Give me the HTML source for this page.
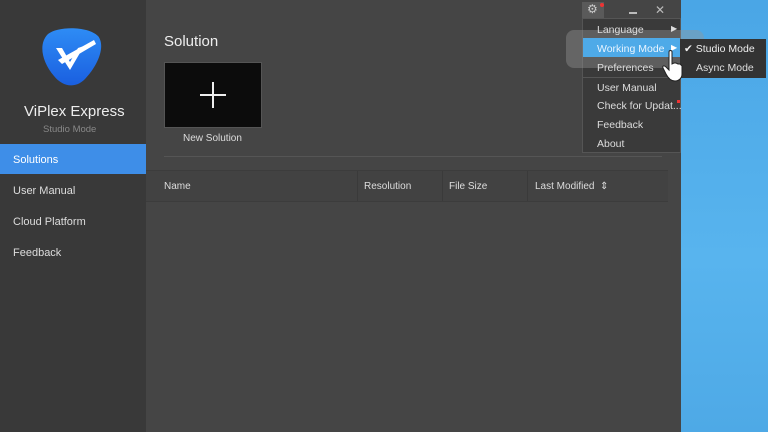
<!DOCTYPE html>
<html><head><style>
*{margin:0;padding:0;box-sizing:border-box}
body{width:768px;height:432px;overflow:hidden;position:relative;font-family:"Liberation Sans",sans-serif;background:#444;color:#ddd}
.side{position:absolute;left:0;top:0;width:146px;height:432px;background:#393939}
.main{position:absolute;left:146px;top:0;width:536px;height:432px;background:#454545}
.blue{position:absolute;left:681px;top:0;width:87px;height:432px;background:linear-gradient(180deg,#4aa6e6,#58b4ee 60%,#4ea9e6)}
.t{position:absolute;white-space:nowrap}
.nav{position:absolute;left:0;width:146px;height:30px;font-size:11px;padding:10px 0 0 13px;color:#ddd}
.mi{position:absolute;left:597px;font-size:10.5px;color:#ddd}
</style></head><body>
<div class="side">
<svg style="position:absolute;left:38px;top:26px" width="66" height="62" viewBox="0 0 66 62">
<defs><linearGradient id="g" x1="0" y1="0" x2="0" y2="1"><stop offset="0" stop-color="#2e8cf5"/><stop offset="1" stop-color="#1a5fe0"/></linearGradient></defs>
<path d="M10 8 C20 0 50 0 60 10 C68 20 60 40 46 54 C36 63 24 60 16 50 C4 36 0 18 10 8Z" fill="url(#g)"/>
<path d="M18 22 L32 44 L46 20 L40 22 L32 36 L24 22Z" fill="#fff"/>
<path d="M20 34 L56 14 L58 18 L24 38Z" fill="#fff"/>
</svg>
<div class="t" style="left:24px;top:103px;font-size:15px;color:#eee">ViPlex Express</div>
<div class="t" style="left:43px;top:124px;font-size:9.5px;color:#888">Studio Mode</div>
<div class="nav" style="top:144px;background:#3e8ee8;color:#fff">Solutions</div>
<div class="nav" style="top:175px">User Manual</div>
<div class="nav" style="top:206px">Cloud Platform</div>
<div class="nav" style="top:237px">Feedback</div>
</div>
<div class="main"></div>
<div class="t" style="left:164px;top:33px;font-size:15px;color:#eee">Solution</div>
<div style="position:absolute;left:164px;top:62px;width:98px;height:66px;background:#0c0c0c;border:1px solid #555"></div>
<div style="position:absolute;left:212px;top:82px;width:2px;height:26px;background:#eee"></div>
<div style="position:absolute;left:200px;top:94px;width:26px;height:2px;background:#eee"></div>
<div class="t" style="left:183px;top:133px;font-size:10px;color:#ddd">New Solution</div>
<div style="position:absolute;left:164px;top:156px;width:498px;height:1px;background:#555"></div>
<div style="position:absolute;left:146px;top:170px;width:522px;height:32px;background:#424242;border-top:1px solid #3c3c3c;border-bottom:1px solid #3c3c3c"></div>
<div style="position:absolute;left:357px;top:171px;width:1px;height:30px;background:#3a3a3a"></div>
<div style="position:absolute;left:442px;top:171px;width:1px;height:30px;background:#3a3a3a"></div>
<div style="position:absolute;left:527px;top:171px;width:1px;height:30px;background:#3a3a3a"></div>
<div class="t" style="left:164px;top:181px;font-size:10px">Name</div>
<div class="t" style="left:364px;top:181px;font-size:10px">Resolution</div>
<div class="t" style="left:449px;top:181px;font-size:10px">File Size</div>
<div class="t" style="left:535px;top:181px;font-size:10px">Last Modified &nbsp;⇕</div>
<div class="blue"></div>
<div style="position:absolute;left:582px;top:2px;width:22px;height:17px;background:#5a5a5a"></div>
<div class="t" style="left:587px;top:2px;font-size:12px;color:#ccc">⚙</div>
<div style="position:absolute;left:600px;top:3px;width:4px;height:4px;border-radius:2px;background:#e33"></div>
<div style="position:absolute;left:629px;top:12px;width:8px;height:2px;background:#bbb"></div>
<div class="t" style="left:655px;top:3px;font-size:12px;color:#bbb">✕</div>
<div style="position:absolute;left:582px;top:18px;width:99px;height:135px;background:#3a3a3a;border:1px solid #555"></div>
<div style="position:absolute;left:566px;top:30px;width:138px;height:38px;background:rgba(150,150,150,.4);border-radius:8px"></div>
<div style="position:absolute;left:583px;top:38px;width:97px;height:19px;background:#4eaae8"></div>
<div class="mi" style="top:24px">Language</div><div class="t" style="left:671px;top:24px;font-size:8px">▶</div>
<div class="mi" style="top:43px;color:#e8f4ff">Working Mode</div><div class="t" style="left:671px;top:43px;font-size:8px;color:#fff">▶</div>
<div class="mi" style="top:62px">Preferences</div>
<div style="position:absolute;left:583px;top:77px;width:97px;height:1px;background:#555"></div>
<div class="mi" style="top:82px">User Manual</div>
<div class="mi" style="top:100px">Check for Updat...</div>
<div style="position:absolute;left:677px;top:100px;width:3px;height:3px;background:#e33"></div>
<div class="mi" style="top:119px">Feedback</div>
<div class="mi" style="top:138px">About</div>
<div style="position:absolute;left:680px;top:39px;width:86px;height:39px;background:#333"></div>
<div class="t" style="left:684px;top:43px;font-size:10.5px;color:#eee">✔ Studio Mode</div>
<div class="t" style="left:696px;top:62px;font-size:10.5px;color:#ddd">Async Mode</div>
<svg style="position:absolute;left:662px;top:50px" width="26" height="34" viewBox="0 0 26 34"><path d="M7 2 C7 0 10 0 10 2 L10 14 L12 13 L14 13 L16 14 L18 14 L20 16 L20 24 C20 28 17 31 13 31 C9 31 6 28 4 24 L1 18 C0 16 2 15 4 17 L7 20Z" fill="#fff" stroke="#222" stroke-width="1"/></svg>
</body></html>
